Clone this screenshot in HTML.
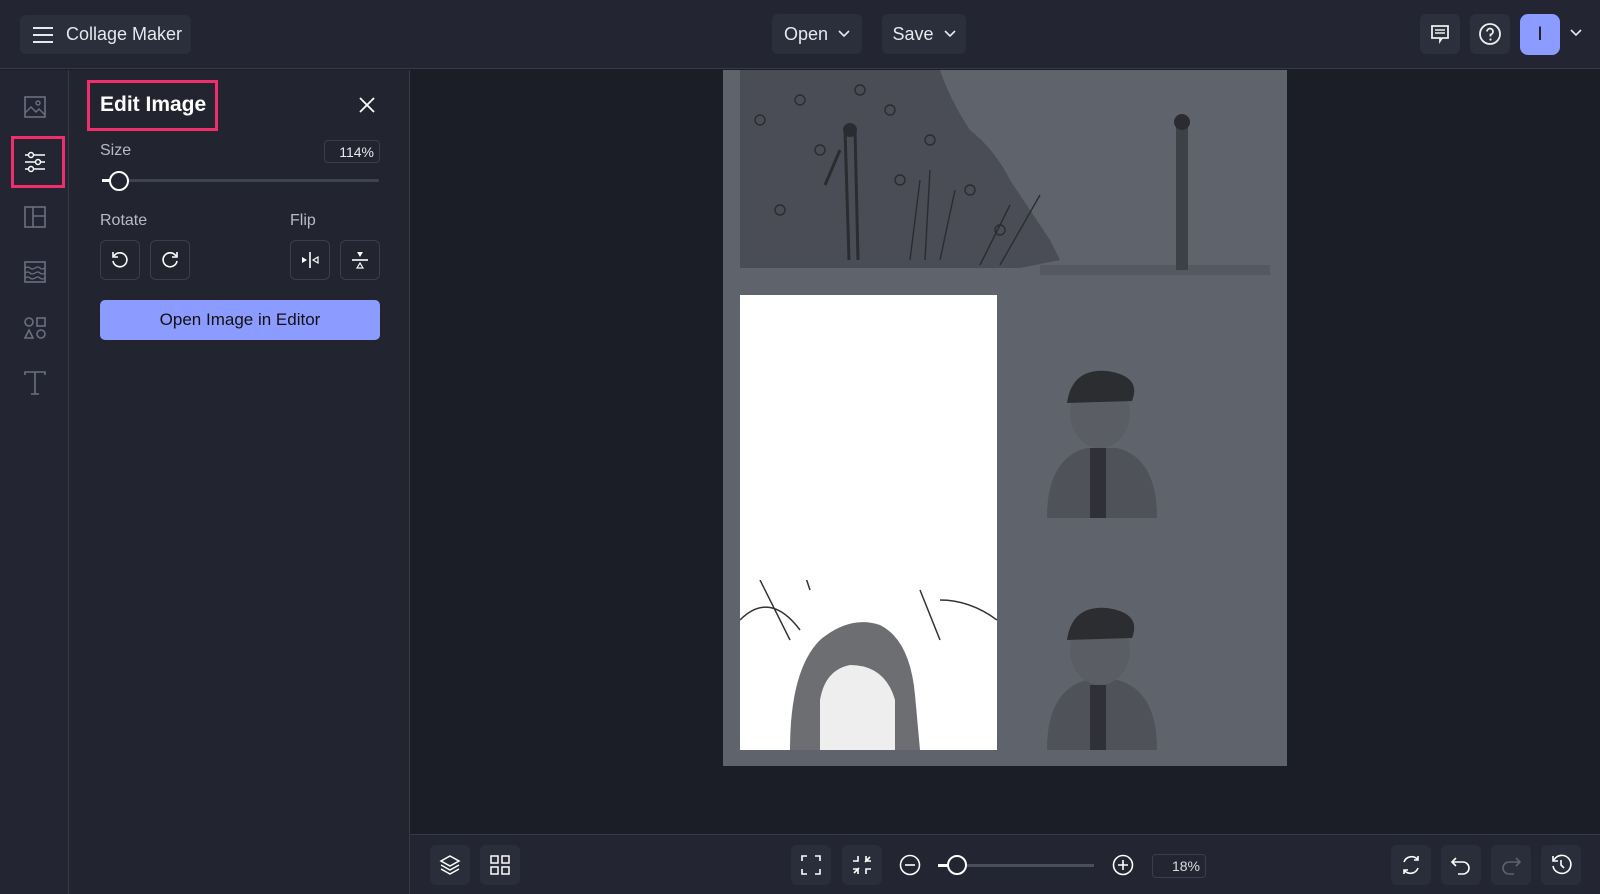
<!DOCTYPE html>
<html><head><meta charset="utf-8"><style>
*{box-sizing:border-box;margin:0;padding:0}
body{width:1600px;height:894px;background:#1c1e27;font-family:"Liberation Sans",sans-serif;color:#e6e8ef;position:relative;overflow:hidden}
.abs{position:absolute}
.btn{position:absolute;background:#2b2e3b;border-radius:6px;display:flex;align-items:center;justify-content:center}
.ib{position:absolute;width:40px;height:40px;border-radius:6px;background:#2a2d3a;display:flex;align-items:center;justify-content:center}
svg{display:block}
.ob{position:absolute;width:40px;height:40px;border:1px solid #3a3d4a;border-radius:6px;display:flex;align-items:center;justify-content:center}
</style></head><body>
<div class="abs" style="left:0;top:0;width:1600px;height:69px;background:#232532;border-bottom:1px solid #363946"></div>
<div class="btn" style="left:20px;top:15px;width:171px;height:39px;justify-content:flex-start;padding-left:12px">
<svg width="22" height="18" viewBox="0 0 22 18"><path d="M1 2h20M1 9h20M1 16h20" stroke="#e6e8ef" stroke-width="2"/></svg>
<span style="margin-left:12px;font-size:18px">Collage Maker</span></div>
<div class="btn" style="left:772px;top:14px;width:90px;height:40px;font-size:18px">Open&nbsp;&nbsp;<svg width="12" height="8"><path d="M1 1l5 5 5-5" stroke="#e6e8ef" stroke-width="1.6" fill="none"/></svg></div>
<div class="btn" style="left:882px;top:14px;width:84px;height:40px;font-size:18px">Save&nbsp;&nbsp;<svg width="12" height="8"><path d="M1 1l5 5 5-5" stroke="#e6e8ef" stroke-width="1.6" fill="none"/></svg></div>
<div class="ib" style="left:1420px;top:14px;background:#2c2f3c"><svg width="22" height="22" viewBox="0 0 22 22"><path d="M3 3h16v12h-6l-2 3v-3H3z" stroke="#eee" stroke-width="1.8" fill="none"/><path d="M6 7h10M6 10h10" stroke="#eee" stroke-width="1.6"/></svg></div>
<div class="ib" style="left:1470px;top:14px;background:#2c2f3c"><svg width="24" height="24" viewBox="0 0 24 24"><circle cx="12" cy="12" r="10" stroke="#eee" stroke-width="1.8" fill="none"/><path d="M9 9.5a3 3 0 1 1 3.5 3v2" stroke="#eee" stroke-width="1.8" fill="none"/><circle cx="12.5" cy="17.5" r="1.1" fill="#eee"/></svg></div>
<div class="abs" style="left:1520px;top:14px;width:40px;height:41px;border-radius:8px;background:#8c9bff;color:#111;font-size:19px;display:flex;align-items:center;justify-content:center">I</div>
<svg class="abs" style="left:1570px;top:29px" width="12" height="8"><path d="M1 1l5 5 5-5" stroke="#e6e8ef" stroke-width="1.6" fill="none"/></svg>
<div class="abs" style="left:0;top:70px;width:69px;height:824px;background:#232532;border-right:1px solid #363946"></div>
<svg class="abs" style="left:24px;top:96px" width="22" height="22" viewBox="0 0 22 22"><rect x="1" y="1" width="20" height="20" stroke="#6b6f80" stroke-width="1.6" fill="none"/><circle cx="14" cy="7" r="2" stroke="#6b6f80" stroke-width="1.4" fill="none"/><path d="M1 17l6-6 5 5 3-3 6 6" stroke="#6b6f80" stroke-width="1.4" fill="none"/></svg>
<div class="abs" style="left:11px;top:136px;width:54px;height:52px;border:3px solid #f02d6d"></div>
<svg class="abs" style="left:24px;top:151px" width="22" height="22" viewBox="0 0 22 22"><path d="M1 4h20M1 11h20M1 18h20" stroke="#fff" stroke-width="1.6"/><circle cx="7" cy="4" r="2.5" fill="#232532" stroke="#fff" stroke-width="1.5"/><circle cx="14" cy="11" r="2.5" fill="#232532" stroke="#fff" stroke-width="1.5"/><circle cx="7" cy="18" r="2.5" fill="#232532" stroke="#fff" stroke-width="1.5"/></svg>
<svg class="abs" style="left:24px;top:206px" width="22" height="22" viewBox="0 0 22 22"><rect x="1" y="1" width="20" height="20" stroke="#6b6f80" stroke-width="1.6" fill="none"/><path d="M9 1v20M9 10h12" stroke="#6b6f80" stroke-width="1.6"/></svg>
<svg class="abs" style="left:24px;top:261px" width="22" height="22" viewBox="0 0 22 22"><rect x="1" y="1" width="20" height="20" stroke="#6b6f80" stroke-width="1.6" fill="none"/><path d="M1 7q3-2 5 0t5 0 5 0 5 0M1 12q3-2 5 0t5 0 5 0 5 0M1 17q3-2 5 0t5 0 5 0 5 0" stroke="#6b6f80" stroke-width="1.3" fill="none"/></svg>
<svg class="abs" style="left:23px;top:316px" width="24" height="24" viewBox="0 0 24 24"><circle cx="6" cy="6" r="4" stroke="#6b6f80" stroke-width="1.6" fill="none"/><rect x="14" y="2" width="8" height="8" stroke="#6b6f80" stroke-width="1.6" fill="none"/><path d="M6 14l4 8H2z" stroke="#6b6f80" stroke-width="1.6" fill="none"/><circle cx="18" cy="18" r="4" stroke="#6b6f80" stroke-width="1.6" fill="none"/></svg>
<svg class="abs" style="left:24px;top:371px" width="22" height="24" viewBox="0 0 22 24"><path d="M1 4V1h20v3M11 1v22M7 23h8" stroke="#6b6f80" stroke-width="1.6" fill="none"/></svg>
<div class="abs" style="left:69px;top:70px;width:341px;height:824px;background:#222430;border-right:1px solid #363946"></div>
<div class="abs" style="left:87px;top:80px;width:131px;height:51px;border:3px solid #f02d6d"></div>
<div class="abs" style="left:100px;top:93px;font-size:21px;font-weight:bold;color:#fff">Edit Image</div>
<svg class="abs" style="left:359px;top:97px" width="16" height="16"><path d="M1 1l14 14M15 1L1 15" stroke="#fff" stroke-width="1.8"/></svg>
<div class="abs" style="left:100px;top:142px;font-size:16px;color:#b8bbc7">Size</div>
<div class="abs" style="left:324px;top:140px;width:56px;height:23px;border:1px solid #3a3d4a;border-radius:4px;font-size:14px;text-align:right;padding:3px 5px 0 0">114%</div>
<div class="abs" style="left:102px;top:179px;width:277px;height:3px;background:#3f4352;border-radius:2px"></div>
<div class="abs" style="left:102px;top:179px;width:18px;height:3px;background:#fff"></div>
<div class="abs" style="left:109px;top:171px;width:20px;height:20px;border-radius:50%;border:2.5px solid #fff;background:#222430"></div>
<div class="abs" style="left:100px;top:212px;font-size:16px;color:#b8bbc7">Rotate</div>
<div class="abs" style="left:290px;top:212px;font-size:16px;color:#b8bbc7">Flip</div>
<div class="ob" style="left:100px;top:240px"><svg width="20" height="20" viewBox="0 0 20 20"><path d="M4 6a7 7 0 1 1-1 5" stroke="#fff" stroke-width="1.6" fill="none"/><path d="M3 2v5h5" stroke="#fff" stroke-width="1.6" fill="none"/></svg></div>
<div class="ob" style="left:150px;top:240px"><svg width="20" height="20" viewBox="0 0 20 20"><path d="M16 6a7 7 0 1 0 1 5" stroke="#fff" stroke-width="1.6" fill="none"/><path d="M17 2v5h-5" stroke="#fff" stroke-width="1.6" fill="none"/></svg></div>
<div class="ob" style="left:290px;top:240px"><svg width="20" height="20" viewBox="0 0 20 20"><path d="M10 2v16" stroke="#fff" stroke-width="1.6"/><path d="M2 7l5 3-5 3z" fill="#fff"/><path d="M18 7l-5 3 5 3z" stroke="#fff" stroke-width="1.2" fill="none"/></svg></div>
<div class="ob" style="left:340px;top:240px"><svg width="20" height="20" viewBox="0 0 20 20"><path d="M2 10h16" stroke="#fff" stroke-width="1.6"/><path d="M7 2l3 5 3-5z" fill="#fff"/><path d="M7 18l3-5 3 5z" stroke="#fff" stroke-width="1.2" fill="none"/></svg></div>
<div class="abs" style="left:100px;top:300px;width:280px;height:40px;background:#8c9bff;border-radius:5px;color:#111;font-size:17px;display:flex;align-items:center;justify-content:center">Open Image in Editor</div>
<div class="abs" style="left:723px;top:70px;width:564px;height:696px;background:#5f636c"></div>
<svg class="abs" style="left:740px;top:70px" width="530" height="215" viewBox="0 0 530 215">
<path d="M0 0h200q10 30 30 60 25 20 40 50 20 30 40 60l10 20-40 8H0z" fill="#4a4d55"/>
<path d="M300 195h230v10H300z" fill="#555860"/>
<g stroke="#2a2c31" stroke-width="1.4" fill="none">
<circle cx="20" cy="50" r="5"/><circle cx="60" cy="30" r="5"/><circle cx="80" cy="80" r="5"/><circle cx="150" cy="40" r="5"/><circle cx="190" cy="70" r="5"/><circle cx="230" cy="120" r="5"/><circle cx="40" cy="140" r="5"/><circle cx="160" cy="110" r="5"/><circle cx="260" cy="160" r="5"/><circle cx="120" cy="20" r="5"/>
<path d="M170 190l10-80M185 190l5-90M200 190l15-70M240 195l30-60M260 195l40-70"/>
</g>
<path d="M105 60l4 130M115 60l3 130M100 80l-15 35" stroke="#2a2c31" stroke-width="3"/>
<circle cx="110" cy="60" r="7" fill="#2a2c31"/>
<rect x="436" y="55" width="12" height="145" fill="#3d4047"/><circle cx="442" cy="52" r="8" fill="#2a2c31"/>
</svg>
<div class="abs" style="left:740px;top:295px;width:257px;height:455px;background:#fff"></div>
<svg class="abs" style="left:740px;top:580px" width="257" height="170" viewBox="0 0 257 170">
<path d="M50 170q0-80 30-110 30-25 60-15 30 15 35 70l5 55z" fill="#6d6e72"/>
<path d="M80 120q5-30 30-35 35 0 45 35v50H80z" fill="#eee"/>
<path d="M0 40q30-30 60 10M200 20q30 0 57 20M20 0l30 60M180 10l20 50M110 -60l-15 40M60 -20l10 30" stroke="#333" stroke-width="1.5" fill="none"/>
</svg>
<svg class="abs" style="left:1042px;top:368px" width="120" height="150" viewBox="0 0 120 150"><path d="M5 150q0-60 40-70h30q40 10 40 70z" fill="#4f5258"/><rect x="48" y="80" width="16" height="70" fill="#2f3136"/><ellipse cx="58" cy="45" rx="30" ry="35" fill="#5a5d64"/><path d="M25 35q5-35 40-32 35 5 25 30" fill="#2b2d31"/></svg>
<svg class="abs" style="left:1042px;top:605px" width="120" height="145" viewBox="0 0 120 145"><path d="M5 145q0-60 40-70h30q40 10 40 70z" fill="#4f5258"/><rect x="48" y="80" width="16" height="65" fill="#2f3136"/><ellipse cx="58" cy="45" rx="30" ry="35" fill="#5a5d64"/><path d="M25 35q5-35 40-32 35 5 25 30" fill="#2b2d31"/></svg>
<div class="abs" style="left:410px;top:834px;width:1190px;height:60px;background:#232532;border-top:1px solid #363946"></div>
<div class="ib" style="left:430px;top:845px"><svg width="22" height="22" viewBox="0 0 22 22"><path d="M11 2l9 5-9 5-9-5z M2 11l9 5 9-5M2 15l9 5 9-5" stroke="#fff" stroke-width="1.5" fill="none"/></svg></div>
<div class="ib" style="left:480px;top:845px"><svg width="20" height="20" viewBox="0 0 20 20"><rect x="1" y="1" width="7" height="7" stroke="#fff" stroke-width="1.5" fill="none"/><rect x="12" y="1" width="7" height="7" stroke="#fff" stroke-width="1.5" fill="none"/><rect x="1" y="12" width="7" height="7" stroke="#fff" stroke-width="1.5" fill="none"/><rect x="12" y="12" width="7" height="7" stroke="#fff" stroke-width="1.5" fill="none"/></svg></div>
<div class="ib" style="left:791px;top:845px"><svg width="20" height="20" viewBox="0 0 20 20"><path d="M1 6V1h5M14 1h5v5M19 14v5h-5M6 19H1v-5" stroke="#fff" stroke-width="1.6" fill="none"/></svg></div>
<div class="ib" style="left:842px;top:845px"><svg width="20" height="20" viewBox="0 0 20 20"><path d="M1 6h5V1M14 1v5h5M19 14h-5v5M6 19v-5H1M13 7l5-5M7 13l-5 5" stroke="#fff" stroke-width="1.6" fill="none"/></svg></div>
<svg class="abs" style="left:899px;top:854px" width="22" height="22" viewBox="0 0 22 22"><circle cx="11" cy="11" r="9.5" stroke="#fff" stroke-width="1.6" fill="none"/><path d="M6 11h10" stroke="#fff" stroke-width="1.6"/></svg>
<div class="abs" style="left:938px;top:864px;width:156px;height:3px;background:#4a4e5c"></div>
<div class="abs" style="left:938px;top:864px;width:12px;height:3px;background:#fff"></div>
<div class="abs" style="left:947px;top:855px;width:20px;height:20px;border-radius:50%;border:2.5px solid #fff;background:#232532"></div>
<svg class="abs" style="left:1112px;top:854px" width="22" height="22" viewBox="0 0 22 22"><circle cx="11" cy="11" r="9.5" stroke="#fff" stroke-width="1.6" fill="none"/><path d="M6 11h10M11 6v10" stroke="#fff" stroke-width="1.6"/></svg>
<div class="abs" style="left:1152px;top:854px;width:54px;height:24px;border:1px solid #3a3d4a;border-radius:4px;font-size:14px;text-align:right;padding:3px 5px 0 0;color:#ddd">18%</div>
<div class="ib" style="left:1391px;top:845px"><svg width="22" height="22" viewBox="0 0 22 22"><path d="M4 8a8 8 0 0 1 14-2M18 14a8 8 0 0 1-14 2" stroke="#fff" stroke-width="1.6" fill="none"/><path d="M18 2v4h-4M4 20v-4h4" stroke="#fff" stroke-width="1.6" fill="none"/></svg></div>
<div class="ib" style="left:1441px;top:845px"><svg width="22" height="22" viewBox="0 0 22 22"><path d="M6 4L2 8l4 4M2 8h11a6 6 0 0 1 0 12H8" stroke="#fff" stroke-width="1.6" fill="none"/></svg></div>
<div class="ib" style="left:1491px;top:845px"><svg width="22" height="22" viewBox="0 0 22 22"><path d="M16 4l4 4-4 4M20 8H9a6 6 0 0 0 0 12h5" stroke="#5e6270" stroke-width="1.6" fill="none"/></svg></div>
<div class="ib" style="left:1541px;top:845px"><svg width="22" height="22" viewBox="0 0 22 22"><path d="M4 6a9 9 0 1 1-1 6" stroke="#fff" stroke-width="1.6" fill="none"/><path d="M3 2v5h5M11 6v5l3 3" stroke="#fff" stroke-width="1.6" fill="none"/></svg></div>
</body></html>
